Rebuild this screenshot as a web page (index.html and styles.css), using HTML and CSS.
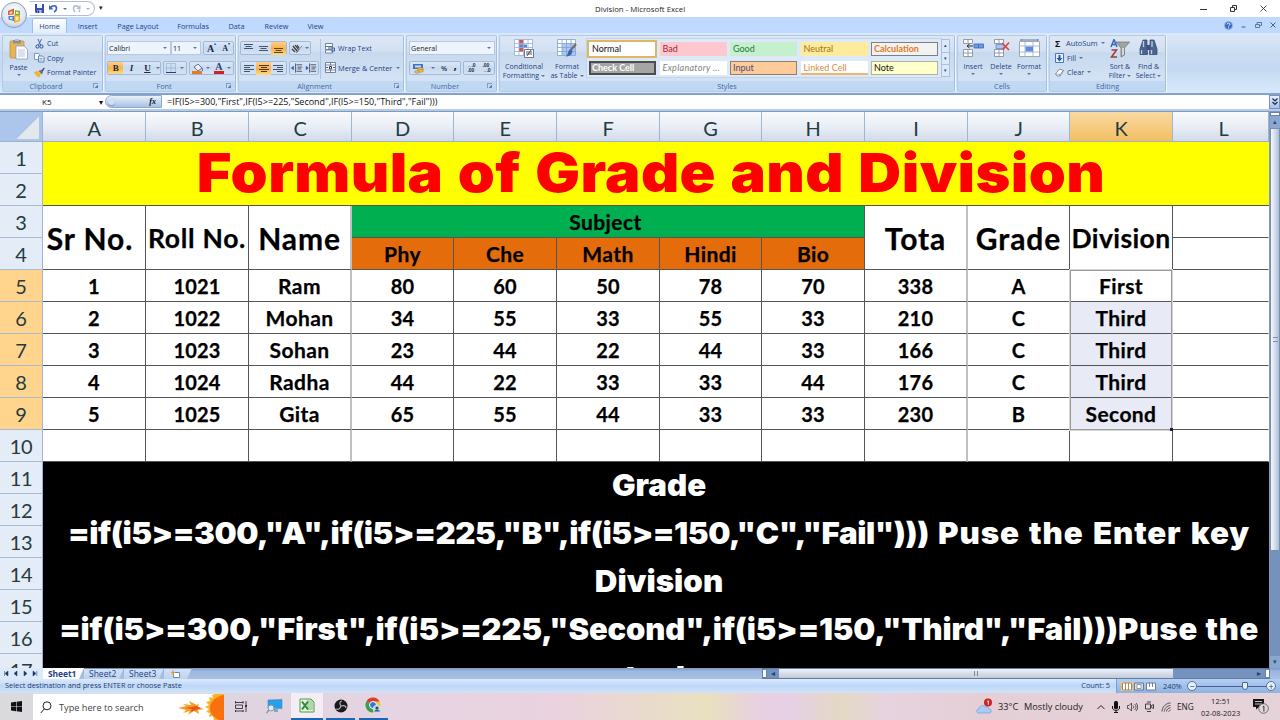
FILE: index.html
```
<!DOCTYPE html>
<html lang="en">
<head>
    <meta charset="UTF-8">
    <meta name="viewport" content="width=device-width, initial-scale=1.0">
    <title>Division - Microsoft Excel</title>
    <link rel="stylesheet" href="styles.css">
</head>
<body>

    <div class="window">

        <header class="titlebar">
            <div class="quick-access">
                <svg width="9" height="9" viewBox="0 0 9 9"><path d="M0 0h9v9H1L0 8z" fill="#3b4fa8"/><path d="M2 0h5v4H2z" fill="#eef3ff"/><path d="M2.500 6h4v3h-4z" fill="#b8c4ea"/><path d="M3 6.500h1.200V9H3z" fill="#26357f"/></svg>
                <svg width="9" height="9" viewBox="0 0 9 9"><path d="M1.500 3.800C3.500 1 7.500 1 7.500 4.200 7.500 6 6.500 7.200 5 8" fill="none" stroke="#3c62c4" stroke-width="1.700"/><path d="M0 1v4.500h4.500z" fill="#3c62c4"/></svg>
                <i class="caret"></i>
                <svg width="9" height="9" viewBox="0 0 9 9"><path d="M7 3.500C5 1 1.500 1 1.500 4.500 1.500 6 2 7 3 8M7.500 8V5.500" fill="none" stroke="#aeb9cd" stroke-width="1.400"/><path d="M8.500 1v4H4.500z" fill="#aeb9cd"/></svg>
                <i class="caret pale"></i>
            </div>
            <span class="customize">&#9662;</span>
            <h1>Division - Microsoft Excel</h1>
            <div class="window-buttons">
                <svg width="7" height="7" viewBox="0 0 7 7"><path d="M0 4.500h7" stroke="#333"/></svg>
                <svg width="7" height="7" viewBox="0 0 7 7"><path d="M.5 2.500h4v4h-4zM2.500 2V.5h4v4H5" fill="none" stroke="#333"/></svg>
                <svg width="7" height="7" viewBox="0 0 7 7"><path d="M.5.5l6 6M6.500.5l-6 6" stroke="#333" stroke-width=".9"/></svg>
            </div>
        </header>

        <div class="office-button">
            <svg width="17" height="17" viewBox="0 0 17 17">
                <path d="M2 4l6-2.500v6L2 8z" fill="#e2582a"/><path d="M3.500 5l3-1v2.500l-3 .5z" fill="#ffd9b8"/>
                <path d="M9 3l5 1v4H9z" fill="#6fae3c"/><path d="M10 4.500l2.500.5v2H10z" fill="#dcf0c4"/>
                <path d="M2.500 9H8v5l-5.500-1.500z" fill="#3f7fd0"/><path d="M4 10h2.500v2.500L4 12z" fill="#d2e6ff"/>
                <path d="M8 8h6v6l-6 2z" fill="#f0ac1c"/><path d="M9.500 9.500h3V13l-3 .8z" fill="#fff0b8"/>
            </svg>
        </div>

        <nav class="tabs">
            <span class="tab active t-home">Home</span>
            <span class="tab t-insert">Insert</span>
            <span class="tab t-page">Page Layout</span>
            <span class="tab t-formulas">Formulas</span>
            <span class="tab t-data">Data</span>
            <span class="tab t-review">Review</span>
            <span class="tab t-view">View</span>
            <div class="doc-buttons">
                <svg width="9" height="9" viewBox="0 0 9 9"><circle cx="4.500" cy="4.500" r="4" fill="#2f66c0" stroke="#9db9e4"/><path d="M3 3.500C3 1.700 6 1.800 6 3.400 6 4.500 4.500 4.300 4.500 5.500M4.500 6.300v1" fill="none" stroke="#fff"/></svg>
                <svg width="6" height="6" viewBox="0 0 6 6"><path d="M.5 5h4" stroke="#4f617f"/></svg>
                <svg width="7" height="6" viewBox="0 0 7 6"><path d="M.5 2.500h4v3h-4zM2 2V.5h4.500v3H5" fill="none" stroke="#5a6c8c" stroke-width=".9"/></svg>
                <svg width="6" height="6" viewBox="0 0 6 6"><path d="M.5.5l5 5M5.500.5l-5 5" stroke="#4f617f"/></svg>
            </div>
        </nav>

        <section class="ribbon">

            <div class="group g-clipboard">
                <div class="tools">
                    <div class="big paste">
                        <svg width="20" height="21" viewBox="0 0 20 21"><rect x="1" y="2" width="14" height="17" rx="1" fill="#e9b453" stroke="#b98736" stroke-width=".7"/><path d="M4 1h8v3.500H4z" fill="#8a8f98"/><path d="M6 0h4v2H6z" fill="#b9bec6"/><path d="M7 7h8l3.500 3.500V20H7z" fill="#fbfcff" stroke="#7c93bb" stroke-width=".7"/><path d="M9 11h7M9 13h7M9 15h7M9 17h7" stroke="#a9bbd8" stroke-width=".8"/></svg>
                        <span>Paste</span>
                        <i class="caret"></i>
                    </div>
                    <div class="list">
                        <div class="item"><svg width="11" height="11" viewBox="0 0 11 11"><path d="M4 1l2.500 6M7.500 1L4.500 7" stroke="#4668a8" fill="none"/><circle cx="3.500" cy="8.500" r="1.600" fill="none" stroke="#27488d"/><circle cx="7.500" cy="8.500" r="1.600" fill="none" stroke="#27488d"/></svg>Cut</div>
                        <div class="item"><svg width="11" height="11" viewBox="0 0 11 11"><path d="M.5 1.500h4l1 1v5h-5z" fill="#fff" stroke="#5e83bf" stroke-width=".8"/><path d="M4.500 4h4l1.500 1.500V10H4.500z" fill="#eaf2ff" stroke="#3f68ab" stroke-width=".8"/><path d="M5.500 6.500h3M5.500 8h3" stroke="#5e83bf" stroke-width=".7"/></svg>Copy</div>
                        <div class="item"><svg width="11" height="11" viewBox="0 0 11 11"><path d="M0 5l4-1 3 3-1.500 3.500C3 10 1 8 0 5z" fill="#edb72e"/><path d="M4.500 4l2-1 2.500 2-1 2.500z" fill="#6f6a94"/><path d="M7 3.500L10 .5l.8.8L8.500 5z" fill="#3f4f87"/></svg>Format Painter</div>
                    </div>
                </div>
                <div class="label with-launcher">Clipboard<i class="launcher"></i></div>
            </div>

            <div class="group g-font">
                <div class="tools rows">
                    <div class="line">
                        <div class="combo font-name">Calibri<i class="caret"></i></div>
                        <div class="combo font-size">11<i class="caret"></i></div>
                        <div class="buttons grow"><b class="big-a">A<sup>&#9652;</sup></b><b class="small-a">A<sup>&#9662;</sup></b></div>
                    </div>
                    <div class="line">
                        <div class="buttons biu"><b class="on">B</b><em>I</em><u>U</u><i class="caret"></i></div>
                        <div class="buttons borders"><svg width="10" height="10" viewBox="0 0 10 10"><path d="M.5.500h9v9M.5.5v9M5 .5v9M.5 5h9" fill="none" stroke="#8ba0c3" stroke-dasharray="1 1"/><path d="M0 9.500h10" stroke="#2b3f66"/></svg><i class="caret"></i></div>
                        <div class="buttons fills">
                            <svg width="11" height="11" viewBox="0 0 11 11"><path d="M2 4l4-3 4 4-4 3z" fill="#e8eefa" stroke="#41598c" stroke-width=".8"/><path d="M9 4.500c2 1 1.500 2 1.500 3.500" stroke="#3669c7" fill="none"/><path d="M0 8h10v3H0z" fill="#e87a1c"/></svg><i class="caret"></i>
                            <span class="font-color">A</span><i class="caret"></i>
                        </div>
                    </div>
                </div>
                <div class="label with-launcher">Font<i class="launcher"></i></div>
            </div>

            <div class="group g-alignment">
                <div class="tools">
                    <div class="align-left">
                        <div class="line">
                            <div class="buttons three">
                                <svg viewBox="0 0 15 13"><path d="M3 2.500h9M4.500 4.500h6M3 6.500h9" stroke="#48536a"/></svg>
                                <svg viewBox="0 0 15 13"><path d="M3 4.500h9M4.500 6.500h6M3 8.500h9" stroke="#48536a"/></svg>
                                <svg class="on" viewBox="0 0 15 13"><path d="M3 6.500h9M4.500 8.500h6M3 10.500h9" stroke="#60461c"/></svg>
                            </div>
                            <div class="buttons orient"><svg width="12" height="11" viewBox="0 0 12 11"><path d="M2 3l5 6M4 2l4 5M1 6l3 3M6 2l2 3" stroke="#333" stroke-width="1.200"/><path d="M5 10l6-7" stroke="#7c879d"/></svg><i class="caret"></i></div>
                        </div>
                        <div class="line">
                            <div class="buttons three">
                                <svg viewBox="0 0 15 13"><path d="M3 3.500h10M3 5.500h6M3 7.500h10M3 9.500h6" stroke="#48536a"/></svg>
                                <svg class="on" viewBox="0 0 15 13"><path d="M3 3.500h10M5 5.500h6M3 7.500h10M5 9.500h6" stroke="#4a3818"/></svg>
                                <svg viewBox="0 0 15 13"><path d="M2 3.500h10M6 5.500h6M2 7.500h10M6 9.500h6" stroke="#48536a"/></svg>
                            </div>
                            <div class="buttons indent">
                                <svg viewBox="0 0 15 13"><path d="M7 2.500h6M8 5h5M8 7h4M7 9.500h6M6 1v10" stroke="#48536a"/><path d="M1 6l3-2.500v5z" fill="#2c5fbe"/></svg>
                                <svg viewBox="0 0 15 13"><path d="M7 2.500h6M8 5h5M8 7h4M7 9.500h6M6 1v10" stroke="#48536a"/><path d="M5 6L2 3.500v5z" fill="#2c5fbe"/></svg>
                            </div>
                        </div>
                    </div>
                    <div class="align-right">
                        <div class="item"><svg width="11" height="11" viewBox="0 0 11 11"><path d="M.5.5h7v3h-7zM.5 3.500h7v3h-7zM.5 7h7v3h-7z" fill="#f8fbff" stroke="#5c6b86" stroke-width=".8"/><path d="M3 5h6.500v3H6" fill="none" stroke="#3c5ca0"/></svg>Wrap Text</div>
                        <div class="item"><svg width="11" height="11" viewBox="0 0 11 11"><path d="M.5.5h10v10H.5zM.5 3h10M.5 8h10M5.500.5V3M5.500 8v2.500" fill="#f8fbff" stroke="#5c6b86" stroke-width=".8"/><path d="M1 5.500h2M8 5.500h2" stroke="#2c5fbe"/><path d="M4.500 4.500h2v2.300h-2z" fill="none" stroke="#222" stroke-width=".9"/></svg><span class="merge-text">Merge &amp; Center</span><i class="caret"></i></div>
                    </div>
                </div>
                <div class="label with-launcher">Alignment<i class="launcher"></i></div>
            </div>

            <div class="group g-number">
                <div class="tools rows">
                    <div class="combo number-format">General<i class="caret"></i></div>
                    <div class="line">
                        <div class="buttons money">
                            <svg width="11" height="11" viewBox="0 0 11 11"><path d="M0 1h10v5H0z" fill="#4a73bd"/><path d="M2 2.500h6v2H2z" fill="#c8dcf8"/><ellipse cx="7.500" cy="6" rx="3" ry="1.300" fill="#f0c24a" stroke="#9a742a" stroke-width=".5"/><ellipse cx="7.500" cy="8" rx="3" ry="1.300" fill="#f0c24a" stroke="#9a742a" stroke-width=".5"/><ellipse cx="4" cy="9" rx="2.500" ry="1.300" fill="#f0c24a" stroke="#9a742a" stroke-width=".5"/></svg><i class="caret"></i><b class="percent-sign">%</b><b class="comma">,</b>
                        </div>
                        <div class="buttons decimals"><span><s>&#8592;</s>.0<br>.00</span><span>.00<br><s>&#8594;</s>.0</span></div>
                    </div>
                </div>
                <div class="label with-launcher">Number<i class="launcher"></i></div>
            </div>

            <div class="group g-styles">
                <div class="tools">
                    <div class="big conditional">
                        <svg width="20" height="19" viewBox="0 0 20 19"><path d="M.5.500h18v16H.5z" fill="#fff"/><path d="M5 1h4v4.500H5zM5 9h4v4H5z" fill="#d9534a"/><path d="M5 5.500h8V9H5z" fill="#5a86d2"/><path d="M.5.500h18v16H.5zM5 .5v16M9.500.500v16M14 .5v16M.5 4.500h18M.5 8.500h18M.5 12.500h18" fill="none" stroke="#96add2" stroke-width=".8"/><path d="M10.500 10.500h9v8h-9z" fill="#fff" stroke="#4b5874" stroke-width=".8"/><path d="M12 13h6M12 15h6M13 17l4-6" stroke="#333" stroke-width=".8"/></svg>
                        <span>Conditional<br>Formatting<i class="caret"></i></span>
                    </div>
                    <div class="big as-table">
                        <svg width="20" height="19" viewBox="0 0 20 19"><path d="M.5.500h18v16H.5z" fill="#fff"/><path d="M5 4.500h13.500v12H5z" fill="#a9c8f2"/><path d="M.5.500h18v16H.5zM5 .5v16M9.500.500v16M14 .5v16M.5 4.500h18M.5 8.500h18M.5 12.500h18" fill="none" stroke="#7f9fd0" stroke-width=".8"/><path d="M19 5l-6 7" stroke="#7b6a57" stroke-width="2"/><path d="M13.500 10.500l2 2c-1 4-4 5-7 5 3-2 2-6 5-7z" fill="#3c63ac"/></svg>
                        <span>Format<br>as Table<i class="caret"></i></span>
                    </div>
                    <div class="gallery">
                        <span class="swatch normal">Normal</span>
                        <span class="swatch bad">Bad</span>
                        <span class="swatch good">Good</span>
                        <span class="swatch neutral">Neutral</span>
                        <span class="swatch calculation">Calculation</span>
                        <span class="swatch check">Check Cell</span>
                        <span class="swatch explanatory">Explanatory ...</span>
                        <span class="swatch input">Input</span>
                        <span class="swatch linked">Linked Cell</span>
                        <span class="swatch note">Note</span>
                    </div>
                    <div class="gallery-scroll"><span>&#9652;</span><span>&#9662;</span><span>&#9662;</span></div>
                </div>
                <div class="label">Styles</div>
            </div>

            <div class="group g-cells">
                <div class="tools">
                    <div class="big">
                        <svg width="21" height="19" viewBox="0 0 21 19"><path d="M.5.500h9v4h-9zM.5 10.500h9v7h-9zM5 .5v4M5 10.500v7M.5 14h9" fill="#fff" stroke="#7b8698" stroke-width=".8"/><path d="M11 5h9.500v4H11zM15.500 5v4" fill="#6c9be6" stroke="#3a65b5" stroke-width=".8"/><path d="M4 7h6M6.500 5L4 7l2.500 2" fill="none" stroke="#333"/></svg>
                        <span>Insert</span><i class="caret"></i>
                    </div>
                    <div class="big">
                        <svg width="21" height="19" viewBox="0 0 21 19"><path d="M3.500.500h9v4h-9zM3.500 10.500h9v7h-9zM8 .5v4M8 10.500v7M3.500 14h9" fill="#fff" stroke="#7b8698" stroke-width=".8"/><path d="M5 5.500h8v4H5z" fill="#a9c4ee" stroke="#5b81c2" stroke-width=".7"/><path d="M11 4l7 7M18 3.500L11.500 11" stroke="#dc4636" stroke-width="1.600"/></svg>
                        <span>Delete</span><i class="caret"></i>
                    </div>
                    <div class="big">
                        <svg width="21" height="19" viewBox="0 0 21 19"><path d="M.5 2.500h20v15H.5z" fill="#fff" stroke="#8995a9" stroke-width=".8"/><path d="M6 2.500v15M14 2.500v15M.5 7h20M.5 13h20" stroke="#9caac2" stroke-width=".8"/><path d="M6.500 7.500h7.500v5H6.500z" fill="#5c8ce0"/><path d="M2 0v2M19 0v2M2 1h17" stroke="#4a5a78" stroke-width=".8"/></svg>
                        <span>Format</span><i class="caret"></i>
                    </div>
                </div>
                <div class="label">Cells</div>
            </div>

            <div class="group g-editing">
                <div class="tools">
                    <div class="list">
                        <div class="item"><b class="sigma">&Sigma;</b><span class="autosum">AutoSum</span><i class="caret"></i></div>
                        <div class="item"><svg width="9" height="10" viewBox="0 0 9 10"><path d="M.5.500h8v9h-8z" fill="#e6f0ff" stroke="#4a76bb"/><path d="M4.500 2v3" stroke="#2458b8" stroke-width="2"/><path d="M1.500 5h6L4.500 8.500z" fill="#2458b8"/></svg>Fill<i class="caret"></i></div>
                        <div class="item"><svg width="9" height="9" viewBox="0 0 9 9"><path d="M.5 6l4-5 4 1.500L5 8H2z" fill="#fff" stroke="#6d7b93" stroke-width=".8"/><path d="M.5 6L5 6.500V8M5 6.500l3.500-4" fill="none" stroke="#6d7b93" stroke-width=".6"/></svg>Clear<i class="caret"></i></div>
                    </div>
                    <div class="big sort">
                        <svg width="20" height="20" viewBox="0 0 20 20"><path d="M6 3h13.500l-5 6v7l-3.500 2V9z" fill="#a3a29f" stroke="#6f6e6c" stroke-width=".7"/><path d="M12 9h2v6.500l-2 1z" fill="#d8d7d3"/><path d="M1 8l3-7.500L7 8M2 5.500h4" fill="none" stroke="#3367be" stroke-width="1.500"/><path d="M1.500 11h5l-5 7H7" fill="none" stroke="#a33d3a" stroke-width="1.600"/></svg>
                        <span>Sort &amp;<br>Filter<i class="caret"></i></span>
                    </div>
                    <div class="big find">
                        <svg width="19" height="19" viewBox="0 0 19 19"><path d="M4 1h4v4l.5 10.500H1V10zM11 1h4l3 9v5.500h-7.500L11 5z" fill="#4c658f" stroke="#2e4166" stroke-width=".7"/><path d="M8 6h3v5H8z" fill="#3b5179"/><path d="M2.500 11v4M4.500 2v6M12.500 11v4M13 2v6" stroke="#bdd0ee" stroke-width="1.300"/></svg>
                        <span>Find &amp;<br>Select<i class="caret"></i></span>
                    </div>
                </div>
                <div class="label">Editing</div>
            </div>
        </section>

        <div class="formula-bar">
            <div class="name-box">K5<span>&#9662;</span></div>
            <div class="fx"><i class="knob"></i><em>fx</em></div>
            <div class="formula">=IF(I5&gt;=300,"First",IF(I5&gt;=225,"Second",IF(I5&gt;=150,"Third","Fail")))</div>
            <div class="expand"><svg width="6" height="8" viewBox="0 0 6 8"><path d="M.5.5L3 3 5.500.5M.5 4L3 6.500 5.500 4" fill="none" stroke="#1d2a44" stroke-width="1.200"/></svg></div>
        </div>

        <main class="workbook">
            <div class="sheet">
                <table>
                    <colgroup>
                        <col class="w-head"><col class="w103"><col class="w103"><col class="w103"><col class="w102"><col class="w103"><col class="w103"><col class="w102"><col class="w103"><col class="w103"><col class="w102"><col class="w103"><col class="w-last">
                    </colgroup>
                    <tr class="columns"><th class="corner"></th><th>A</th><th>B</th><th>C</th><th>D</th><th>E</th><th>F</th><th>G</th><th>H</th><th>I</th><th>J</th><th class="sel">K</th><th class="last">L</th></tr>
                    <tr><th>1</th><td class="title" colspan="12" rowspan="2"><span>Formula of Grade and Division</span></td></tr>
                    <tr><th>2</th></tr>
                    <tr>
                        <th>3</th>
                        <td class="head sr" rowspan="2">Sr No.</td><td class="head small roll" rowspan="2">Roll No.</td><td class="head soft" rowspan="2">Name</td>
                        <td class="subject" colspan="5">Subject</td>
                        <td class="head soft" rowspan="2">Tota</td><td class="head" rowspan="2">Grade</td><td class="head small division" rowspan="2">Division</td><td></td>
                    </tr>
                    <tr><th>4</th><td class="orange">Phy</td><td class="orange">Che</td><td class="orange">Math</td><td class="orange">Hindi</td><td class="orange">Bio</td><td></td></tr>
                    <tr><th class="sel">5</th><td>1</td><td>1021</td><td class="word soft">Ram</td><td>80</td><td>60</td><td>50</td><td>78</td><td>70</td><td class="soft">338</td><td>A</td><td class="word">First</td><td></td></tr>
                    <tr><th class="sel">6</th><td>2</td><td>1022</td><td class="word soft">Mohan</td><td>34</td><td>55</td><td>33</td><td>55</td><td>33</td><td class="soft">210</td><td>C</td><td class="word picked">Third</td><td></td></tr>
                    <tr><th class="sel">7</th><td>3</td><td>1023</td><td class="word soft">Sohan</td><td>23</td><td>44</td><td>22</td><td>44</td><td>33</td><td class="soft">166</td><td>C</td><td class="word picked">Third</td><td></td></tr>
                    <tr><th class="sel">8</th><td>4</td><td>1024</td><td class="word soft">Radha</td><td>44</td><td>22</td><td>33</td><td>33</td><td>44</td><td class="soft">176</td><td>C</td><td class="word picked">Third</td><td></td></tr>
                    <tr><th class="sel">9</th><td>5</td><td>1025</td><td class="word soft">Gita</td><td>65</td><td>55</td><td>44</td><td>33</td><td>33</td><td class="soft">230</td><td>B</td><td class="word picked">Second</td><td></td></tr>
                    <tr><th>10</th><td></td><td></td><td class="soft"></td><td></td><td></td><td></td><td></td><td></td><td class="soft"></td><td></td><td></td><td></td></tr>
                    <tr>
                        <th>11</th>
                        <td class="notes" colspan="12" rowspan="7">
                            <div class="notes-text">
                                <p>Grade</p>
                                <p><span class="code">=if(i5&gt;=300,"A",if(i5&gt;=225,"B",if(i5&gt;=150,"C","Fail")))</span><span class="hint"> Puse the Enter key</span></p>
                                <p>Division</p>
                                <p class="long">=if(i5&gt;=300,"First",if(i5&gt;=225,"Second",if(i5&gt;=150,"Third","Fail)))<span class="hint">Puse the</span></p>
                                <p>enter key</p>
                            </div>
                        </td>
                    </tr>
                    <tr><th>12</th></tr>
                    <tr><th>13</th></tr>
                    <tr><th>14</th></tr>
                    <tr><th>15</th></tr>
                    <tr><th>16</th></tr>
                    <tr><th>17</th></tr>
                </table>
                <div class="selection"></div>
            </div>
            <div class="v-scroll">
                <div class="split"></div>
                <div class="arrow">&#9652;</div>
                <div class="v-thumb"><i></i></div>
                <div class="v-track"></div>
                <div class="arrow">&#9662;</div>
            </div>
        </main>

        <div class="sheet-bar">
            <div class="sheet-nav">
                <svg width="42" height="11" viewBox="0 0 42 11"><path d="M4.500 3v5M8 3v5L5 5.500zM17 3v5l-3-2.500zM24 3v5l3-2.500zM33 3v5l3-2.500zM36.800 3v5" fill="#1c3568" stroke="#1c3568" stroke-width=".5"/></svg>
            </div>
            <div class="sheet-tab current">Sheet1</div>
            <div class="sheet-tab">Sheet2</div>
            <div class="sheet-tab">Sheet3</div>
            <div class="sheet-tab new"><svg width="10" height="8" viewBox="0 0 10 8"><path d="M2.500 2.500h6v5h-6z" fill="#fff" stroke="#55719f" stroke-width=".8"/><path d="M2 0v5M0 2.500h4" stroke="#e4a01f" stroke-width="1.200"/></svg></div>
            <div class="h-scroll">
                <div class="h-split"></div>
                <div class="h-arrow">&#9666;</div>
                <div class="h-thumb"><i></i></div>
                <div class="h-arrow right">&#9656;</div>
                <div class="h-split"></div>
            </div>
        </div>

        <footer class="status">
            <span class="message">Select destination and press ENTER or choose Paste</span>
            <span class="count">Count: 5</span>
            <div class="zoom-area">
                <div class="views">
                    <svg class="on" width="12" height="9" viewBox="0 0 12 9"><path d="M1.500 1h9v7h-9zM4.500 1v7M7.500 1v7" fill="#fff" stroke="#8a7440" stroke-width=".8"/></svg>
                    <svg width="12" height="9" viewBox="0 0 12 9"><path d="M1.500 1h9v7h-9z" fill="#d9dfe8" stroke="#56657f" stroke-width=".8"/><path d="M4 2.500h4v4H4z" fill="#fff" stroke="#56657f" stroke-width=".6"/></svg>
                    <svg width="12" height="9" viewBox="0 0 12 9"><path d="M1.500 1h9v7h-9zM4.500 1v4M7.500 1v4" fill="#fff" stroke="#56657f" stroke-width=".8"/></svg>
                </div>
                <span class="percent">240%</span>
                <span class="round">&#8722;</span>
                <div class="slider"><i></i></div>
                <span class="round">+</span>
            </div>
        </footer>

        <div class="taskbar">
            <div class="start"><svg width="11" height="11" viewBox="0 0 11 11"><path d="M0 1.500L5 .8v4.400H0zM5.600.7L11 0v5.200H5.600zM0 5.800h5v4.400L0 9.500zM5.600 5.800H11V11l-5.400-.7z" fill="#111"/></svg></div>
            <div class="search">
                <svg width="12" height="13" viewBox="0 0 12 13"><circle cx="7" cy="4.800" r="4" fill="none" stroke="#222"/><path d="M4.300 7.800L.8 12" stroke="#222"/></svg>
                <span>Type here to search</span>
                <svg class="sun" width="46" height="27" viewBox="0 0 46 27">
                    <path d="M46 0h-9l-3 1 1 3-4-1 1 4-4 1 3 3-4 2 4 2-3 3 4 1-1 4 4-1 1 4 10 1z" fill="#fbb326"/>
                    <path d="M46 1c-7 1-14 6-14 13s6 12 14 13z" fill="#f9700f"/>
                    <path d="M0 14l8-2-3-2 8 1-2-4 8 4 2-2-1 4 6 2-6 1 1 4-5-3-6 4 2-4-7 2 3-3z" fill="#f6a02a"/>
                    <path d="M6 14l7-1 5-1 5 2-5 2-6 2 2-3z" fill="#ea5416"/>
                </svg>
            </div>
            <div class="app"><svg width="12" height="11" viewBox="0 0 12 11"><path d="M.5 0v2.500M8 0v2.500M0 1.500h8.500M.5 4h7v3.500h-7zM.5 11V9M8 11V9M0 10h8.500M11 0v11" fill="none" stroke="#333" stroke-width=".9"/><path d="M10 4h2v2h-2z" fill="#333"/></svg></div>
            <div class="app"><svg width="17" height="15" viewBox="0 0 17 15"><path d="M2 1l14-.5v9L2 9z" fill="#279ee8" stroke="#3f89c0" stroke-width=".6"/><path d="M8 10h4v3H8z" fill="#7ea6c6"/><circle cx="5" cy="9" r="3" fill="#d6ecfb" stroke="#8096ab"/><path d="M3 11L.5 14" stroke="#8096ab" stroke-width="1.300"/></svg></div>
            <div class="app open lit"><svg width="16" height="15" viewBox="0 0 16 15"><path d="M1 1h11l3 3v10H1z" fill="#e8f3e2" stroke="#4d9a48"/><path d="M8 3h6M8 5h6M8 7h6M8 9h6M8 11h6" stroke="#63a85b" stroke-width=".8"/><path d="M3 3.500l6 8M9 3.500l-6 8" stroke="#2a8a35" stroke-width="2"/></svg></div>
            <div class="app open"><svg width="14" height="14" viewBox="0 0 14 14"><circle cx="7" cy="7" r="6.500" fill="#191a1c"/><path d="M7 7C5 4 6 2 8 2M7 7c3-1 5 0 5 2M7 7c-1 3-3 4-5 3" fill="none" stroke="#aeb0b4" stroke-width="1.200"/></svg></div>
            <div class="app open"><svg width="17" height="17" viewBox="0 0 17 17"><circle cx="8" cy="8" r="7.500" fill="#f7c72a"/><path d="M8 8L1.500 4.200A7.500 7.500 0 0 1 14.500 4.500H8z" fill="#df3b30"/><path d="M1.500 4.200A7.500 7.500 0 0 0 8 15.500L10.500 10 8 8z" fill="#34a350"/><circle cx="8" cy="8" r="3.500" fill="#2f76dd" stroke="#fff"/><circle cx="12" cy="12" r="4.300" fill="#c9dced"/><circle cx="12" cy="11" r="1.600" fill="#444"/><path d="M9 14.500c1-2.500 5-2.500 6 0" fill="#315a9b"/></svg></div>

            <div class="tray">
                <svg class="weather" width="18" height="17" viewBox="0 0 18 17"><path d="M3 15c-3 0-3-4 0-4 0-4 5-4 6-2 3-1 4 1 4 2 3 0 3 4 0 4z" fill="#a9cdf6" stroke="#6f9edc" stroke-width=".7"/><circle cx="12" cy="4.500" r="4" fill="#cf2320"/><path d="M11.300 3.500l1-.8v4" fill="none" stroke="#fff" stroke-width=".9"/></svg>
                <span class="temp">33&deg;C</span>
                <span class="cloudy">Mostly cloudy</span>
                <div class="tray-icons">
                    <svg width="8" height="8" viewBox="0 0 8 8"><path d="M.5 6L4 2.500 7.500 6" fill="none" stroke="#222"/></svg>
                    <svg width="8" height="12" viewBox="0 0 8 12"><rect x="2" y="0" width="4" height="8" rx="1.500" fill="#111"/><path d="M.5 5v2c0 3 7 3 7 0V5M4 9v2M2 11.500h4" fill="none" stroke="#111"/></svg>
                    <svg width="11" height="10" viewBox="0 0 11 10"><path d="M.5 3.500h1.500L4.500 1v8L2 6.500H.5zM6 3.500c1 1 1 2 0 3M7.500 2c2 2 2 4 0 6M9 1c2.300 2.500 2.300 5.500 0 8" fill="none" stroke="#333" stroke-width=".8"/></svg>
                    <svg width="9" height="11" viewBox="0 0 9 11"><path d="M.5 3h5v5h-5zM6 5l2.500-1.500v4L6 6zM2 1h4M2 10.500h4" fill="none" stroke="#333" stroke-width=".9"/></svg>
                    <svg width="10" height="10" viewBox="0 0 10 10"><path d="M1 9.500C1 5 5 1 9.500 1M3.300 9.500c0-3 3-6 6.200-6M5.500 9.500c0-2 2-3.700 4-3.700M7.500 9.500L9.500 8" fill="none" stroke="#444" stroke-width=".9"/></svg>
                </div>
                <span class="lang">ENG</span>
                <div class="clock">12:51<br>02-08-2023</div>
                <svg class="action" width="18" height="17" viewBox="0 0 18 17"><path d="M1 1h11v8H7l-3 2.500V9H1z" fill="#151515"/><path d="M3 3.500h7M3 6h7" stroke="#e4d4dc" stroke-width=".9"/><circle cx="11.500" cy="10.500" r="4.800" fill="#e4d7dc" stroke="#555" stroke-width=".8"/><path d="M10.700 9l1.200-1v5.500" fill="none" stroke="#333"/></svg>
            </div>
        </div>
    </div>

</body>
</html>
```

FILE: styles.css
```
* {
    box-sizing: border-box;
}

body {
    margin: 0;
    width: 1280px;
    height: 720px;
    overflow: hidden;
    font-family: "Open Sans", "Noto Sans", sans-serif;
    font-size: 7.1px;
    color: #1f4283;
}

svg {
    display: block;
    flex: none;
}

.window {
    position: relative;
    display: flex;
    flex-direction: column;
    width: 1280px;
    height: 720px;
    background: #bfd7f7;
}

.caret {
    display: inline-block;
    flex: none;
    width: 0;
    height: 0;
    border: 2px solid transparent;
    border-top: 2px solid #5f7597;
    border-bottom: 0;
}

.caret.pale {
    border-top-color: #a9b5c9;
}

/* title bar */
.titlebar {
    display: flex;
    height: 17px;
    background: #fff;
    color: #222;
}

.quick-access {
    display: flex;
    align-items: center;
    gap: 5px;
    width: 66px;
    height: 15px;
    margin: 1px 0 0 29px;
    padding-left: 5px;
    border: 1px solid #b6bfcd;
    border-left-color: transparent;
    border-radius: 0 8px 8px 0;
}

.customize {
    width: 120px;
    padding: 3px 0 0 4px;
    font-size: 7px;
}

h1 {
    flex: 1;
    margin: 0;
    padding: 4px 0 0 380px;
    font-size: 7.8px;
    font-weight: 400;
    line-height: 10px;
}

.window-buttons {
    display: flex;
    gap: 23px;
    padding: 5px 13px 0 0;
}

.office-button {
    position: absolute;
    left: 1px;
    top: 2px;
    z-index: 2;
    display: grid;
    place-items: center;
    width: 26px;
    height: 26px;
    border: 1px solid #8e9db5;
    border-radius: 50%;
    background: radial-gradient(circle at 50% 35%, #fff, #dde5f0 60%, #aab8cd);
}

/* ribbon tabs */
.tabs {
    display: flex;
    height: 16px;
    padding-left: 32px;
    background: #bfd9ff;
    font-size: 7.3px;
}

.tab {
    padding-top: 4px;
    text-align: center;
    line-height: 10px;
}

.tab.active {
    height: 17px;
    margin-top: 1px;
    padding-top: 2px;
    border: 1px solid #9fbde6;
    border-bottom: 0;
    border-radius: 2px 2px 0 0;
    background: linear-gradient(#fdfeff, #dfebf9);
}

.t-home { width: 35px; }
.t-insert { width: 41px; }
.t-page { width: 60px; }
.t-formulas { width: 50px; }
.t-data { width: 37px; }
.t-review { width: 43px; }
.t-view { width: 35px; }

.doc-buttons {
    display: flex;
    flex: 1;
    justify-content: flex-end;
    align-items: center;
    gap: 8px;
    padding-right: 4px;
}

/* ribbon */
.ribbon {
    display: flex;
    gap: 2px;
    height: 62px;
    padding: 2px;
    border-bottom: 2px solid #84a3cc;
    background: linear-gradient(#dce8f7, #c9dcf2 35%, #c4d9f2 60%, #d9e9fb);
}

.group {
    display: flex;
    flex-direction: column;
    height: 57px;
    border: 1px solid #b4cbe8;
    border-right-color: #a3bddf;
    border-radius: 2px;
    background: linear-gradient(#dde8f6, #d2e0f2 28%, #c8d9ee 30%, #d8e6f7);
    box-shadow: 1px 0 0 #eef5fd;
}

.tools {
    display: flex;
    flex: 1;
    min-height: 0;
}

.label {
    display: flex;
    justify-content: center;
    align-items: center;
    position: relative;
    height: 10px;
    background: #c0d8f1;
    color: #4068a6;
    font-size: 7.3px;
}

.with-launcher {
    padding-right: 13px;
}

.launcher {
    position: absolute;
    right: 4px;
    top: 2px;
    width: 5px;
    height: 5px;
    border: 1px solid #7f9dc8;
    border-right-width: 0;
    border-bottom-width: 0;
    background: linear-gradient(135deg, transparent 60%, #5d7fb3 60%);
}

.g-clipboard { width: 101px; }
.g-font { width: 131px; }
.g-alignment { width: 166px; }
.g-number { width: 91px; }
.g-styles { width: 456px; }
.g-cells { width: 90px; }
.g-editing { width: 117px; }

.big {
    display: flex;
    flex-direction: column;
    align-items: center;
    padding-top: 3px;
    text-align: center;
    line-height: 8.5px;
    white-space: nowrap;
}

.big span {
    margin-top: 4px;
}

.big span .caret {
    margin: 0 0 1px 2px;
}

.big > .caret {
    margin-top: 2px;
}

.paste {
    width: 31px;
}

.paste span {
    margin-top: 3px;
}

.list {
    display: flex;
    flex-direction: column;
}

.item {
    display: flex;
    align-items: center;
    gap: 2px;
    height: 14.5px;
    white-space: nowrap;
}

.line {
    display: flex;
    gap: 2px;
}

.rows {
    flex-direction: column;
    gap: 6px;
    padding-top: 5px;
}

.combo {
    display: flex;
    align-items: center;
    justify-content: space-between;
    height: 14px;
    padding: 0 3px 0 1px;
    border: 1px solid #b3c9e6;
    background: #edf4fd;
    color: #222;
}

.buttons {
    display: flex;
    align-items: center;
    justify-content: space-around;
    height: 14px;
    border: 1px solid #9fb9db;
    border-radius: 2px;
    background: linear-gradient(#dbe7f6, #c9daef 50%, #d4e3f5);
    color: #1c2a44;
}

.on {
    background: linear-gradient(#fdcf8c, #f9b04a 50%, #fcdb84);
}

/* font group */
.g-font .rows { padding-left: 1px; }
.font-name { width: 64px; }
.font-size { width: 30px; margin-left: -2px; }
.grow { width: 31px; font-family: "Liberation Serif", serif; }
.grow sup { position: relative; top: -2px; font-size: 4px; line-height: 0; color: #2b5ab0; }
.big-a { font-size: 10px; }
.small-a { font-size: 8px; }
.biu { width: 54px; font-family: "Liberation Serif", serif; font-size: 9px; }
.biu b, .biu em, .biu u { width: 15px; height: 12px; text-align: center; line-height: 12px; font-weight: 700; }
.borders { width: 24px; }
.fills { width: 45px; }

.font-color {
    width: 10px;
    height: 11px;
    border-bottom: 3px solid #d32020;
    font: bold 10px/8px "Liberation Serif", serif;
    text-align: center;
    color: #26437c;
}

/* alignment group */
.align-left {
    display: flex;
    flex-direction: column;
    gap: 6px;
    width: 81px;
    padding: 5px 0 0 1px;
}

.three { width: 47px; }
.three svg { width: 15px; height: 13px; }
.orient { width: 22px; }
.indent { width: 30px; }
.indent svg { width: 14px; height: 13px; }

.align-right {
    display: flex;
    flex-direction: column;
    gap: 5px;
    margin-top: 3px;
    padding: 2px 0 0 4px;
    height: 40px;
    border-left: 1px solid #adc4e2;
}

.merge-text { font-size: 7.4px; }
.align-right .caret { margin-left: 2px; }

/* number group */
.g-number .rows { padding-left: 2px; }
.number-format { width: 86px; }
.money { width: 52px; }
.percent-sign { font-weight: 600; }
.money .comma { font-size: 12px; line-height: 4px; margin-top: -6px; }
.decimals { width: 32px; font: bold 5px/5px "Liberation Sans", sans-serif; }
.decimals s { color: #2c5fbe; text-decoration: none; font-size: 4px; }

/* styles group */
.conditional { width: 48px; }
.as-table { width: 38px; }

.gallery {
    display: grid;
    grid-template-columns: repeat(5, 70.5px);
    grid-template-rows: 19px 19px;
    margin-top: 2px;
    width: 356px;
    height: 40px;
    background: #dce9f8;
    border: 1px solid #c1d4ec;
    font-family: Lato, sans-serif;
    font-size: 9px;
}

.swatch {
    align-self: center;
    width: 67px;
    height: 14px;
    margin-left: 2px;
    padding-left: 3px;
    line-height: 14px;
    white-space: nowrap;
    overflow: hidden;
}

.normal { width: 70px; height: 18px; margin-left: 0; padding-left: 3px; border: 2px solid #e2b661; background: #fff; color: #111; }
.bad { background: #ffc7ce; color: #9c2a36; }
.good { background: #c6efce; color: #257a35; }
.neutral { background: #ffeb9c; color: #9c7420; }
.calculation { border: 1px solid #7f7f7f; background: #f2f2f2; color: #e27b22; font-weight: 700; line-height: 12px; padding-left: 2px; }
.check { border: 2px solid #4d4d4d; background: #a5a5a5; color: #fff; font-weight: 700; line-height: 10px; padding-left: 1px; }
.explanatory { background: #fff; color: #7f7f7f; font-style: italic; letter-spacing: 0.3px; }
.input { border: 1px solid #8c7f76; background: #ffcc99; color: #4d4b78; line-height: 12px; padding-left: 2px; }
.linked { border-bottom: 2px solid #f0b66e; background: #fff; color: #dc8a3d; }
.note { border: 1px solid #b2b2a0; background: #ffffcc; color: #111; line-height: 12px; padding-left: 2px; }

.gallery-scroll {
    display: grid;
    grid-template-rows: repeat(3, 1fr);
    width: 9px;
    height: 38px;
    margin: 3px 0 0 -1px;
    border: 1px solid #a9c0df;
    background: #dce9f8;
    font-size: 5px;
    text-align: center;
    line-height: 11px;
}

.gallery-scroll span + span {
    border-top: 1px solid #a9c0df;
}

.g-cells .big { width: 28px; }
.g-cells .tools { padding-left: 1px; }

/* editing group */
.g-editing .list { width: 57px; padding-left: 5px; }
.g-editing .item { gap: 3px; }
.sigma { width: 8px; font-size: 9px; color: #111; }
.autosum { font-size: 7.4px; }
.sort { width: 26px; }
.find { width: 31px; }
.g-editing .big span { margin-top: 3px; }
.g-editing .find span { margin-top: 4px; }

/* formula bar */
.formula-bar {
    display: flex;
    height: 14px;
    background: #fff;
    color: #111;
    font-size: 9px;
    line-height: 14px;
}

.name-box {
    width: 105px;
    padding-left: 42px;
    font-size: 8px;
}

.name-box span {
    float: right;
    margin-right: 2px;
}

.fx {
    display: flex;
    justify-content: space-between;
    width: 57px;
    height: 13px;
    margin-right: 5px;
    padding-right: 5px;
    border: 1px solid #8faad0;
    border-radius: 7px 0 0 7px;
    background: linear-gradient(#e9f1fb, #a8c1e6);
    font: bold italic 8px/12px "Liberation Serif", serif;
}

.knob {
    width: 7px;
    height: 7px;
    margin: 2px;
    border-radius: 50%;
    background: #d5e0ef;
    box-shadow: 0 1px 1px #7d96bb;
}

.formula {
    flex: 1;
    white-space: nowrap;
}

.expand {
    display: grid;
    place-items: center;
    width: 11px;
    border: 1px solid #7993bb;
    background: linear-gradient(#e6f0fc, #a5c0e6);
}

/* worksheet */
.workbook {
    display: flex;
    height: 559px;
    border-top: 2px solid #b5cbe8;
    background: #7e9bbf;
    padding-top: 1px;
}

.sheet {
    position: relative;
    width: 1269px;
    height: 556px;
    overflow: hidden;
    background: #fff;
}

table {
    width: 1269px;
    table-layout: fixed;
    border-spacing: 0;
    font-family: Lato, sans-serif;
}

.w-head { width: 43px; }
.w103 { width: 103px; }
.w102 { width: 102px; }
.w-last { width: 96px; }

th {
    height: 32px;
    padding: 1px 0 0;
    border-right: 1px solid #9fb5d0;
    border-bottom: 1px solid #a9bbd2;
    background: #e4ecf7;
    color: #243b42;
    font-size: 20px;
    font-weight: 400;
    line-height: 20px;
    letter-spacing: -0.3px;
}

.columns th {
    height: 30px;
    padding-top: 2px;
    background: linear-gradient(#f8fafd, #e9eef5 50%, #d3dbe9);
    border-bottom-color: #9fb0c8;
}

.columns .corner {
    background: linear-gradient(to bottom right, transparent 50%, #e3e8ef 50%) 16px 5px / 23px 22px no-repeat, #abc6ea;
}

.columns .last {
    padding-left: 6px;
}

th.sel {
    background: #ffd58d;
}

.columns .sel {
    background: linear-gradient(#f9d9a2, #f2bf62);
}

td {
    height: 32px;
    padding: 0;
    border-right: 1px solid #555;
    border-bottom: 1px solid #555;
    color: #000;
    font-size: 20px;
    font-weight: 700;
    line-height: 24px;
    letter-spacing: 0.2px;
    text-align: center;
    vertical-align: middle;
    white-space: nowrap;
    -webkit-text-stroke: 0.25px #000;
}

td:last-child {
    border-right-color: transparent;
}

td.soft {
    border-right: 2px solid #c0c0c0;
}

td.title {
    border-right: 0;
    background: #ff0;
    color: #f00;
    font-family: Inter, sans-serif;
    font-size: 54px;
    font-weight: 900;
    line-height: 60px;
    letter-spacing: 0.35px;
    word-spacing: 2px;
    -webkit-text-stroke: 0;
}

.title span {
    display: inline-block;
    transform: translate(-5px, -1px) scaleX(1.1);
}

td.word,
td.subject,
td.orange {
    font-size: 21px;
    letter-spacing: 0.4px;
}

td.subject {
    padding-right: 5px;
}

td.head {
    font-size: 30px;
    letter-spacing: 0.9px;
}

td.sr {
    padding-right: 8px;
}

td.small {
    font-size: 26.5px;
    letter-spacing: 0.7px;
}

td.division {
    letter-spacing: 0.4px;
}

.subject {
    background: #00b050;
}

.orange {
    background: #e46c0a;
}

.picked {
    background: #e8eaf5;
}

td.notes {
    border: 0;
    background: #000;
    color: #fff;
    font-family: Inter, sans-serif;
    font-size: 30px;
    font-weight: 900;
    letter-spacing: 0;
    vertical-align: top;
    -webkit-text-stroke: 0;
}

.notes-text {
    height: 206px;
    overflow: hidden;
}

.notes p {
    margin: 0;
    line-height: 48px;
    transform: translate(3px, -1px) scaleX(1.043);
}

.notes .long {
    letter-spacing: -0.1px;
    transform: translate(3px, -1px) scaleX(1.031);
}

.code {
    letter-spacing: -0.44px;
}

.hint {
    letter-spacing: 0.85px;
    word-spacing: 2px;
}

.long .hint {
    letter-spacing: 0.6px;
    word-spacing: 1px;
}

.selection {
    position: absolute;
    left: 1069px;
    top: 157px;
    width: 104px;
    height: 162px;
    border: 2px solid #999;
    outline: 1px solid #d5d5d5;
    outline-offset: -1px;
}

.selection::after {
    content: "";
    position: absolute;
    right: -2px;
    bottom: -2px;
    width: 3px;
    height: 3px;
    background: #222;
}

.v-scroll {
    display: flex;
    flex-direction: column;
    width: 11px;
    border-left: 1px solid #7f99c0;
    background: #7591bd;
}

.split {
    height: 4px;
    border: 1px solid #6681ab;
    background: #fff;
}

.arrow {
    height: 12px;
    background: #8ba6cf;
    color: #2c4779;
    font-size: 7px;
    line-height: 12px;
    text-align: center;
}

.v-thumb {
    display: grid;
    place-items: center;
    height: 423px;
    border: 1px solid #7a8dab;
    border-radius: 1px;
    background: linear-gradient(90deg, #f6f9fd, #d3dceb 50%, #aebfd9);
}

.v-thumb i {
    width: 5px;
    height: 5px;
    border: 1px solid #8191ab;
    border-width: 1px 0;
}

.v-track {
    flex: 1;
}

/* sheet tabs */
.sheet-bar {
    display: flex;
    height: 11px;
    background: linear-gradient(#7c99c6, #9db7dd 30%, #a7c0e4);
    font-size: 8.5px;
    line-height: 11px;
}

.sheet-nav {
    width: 43px;
    background: #dce9f9;
}

.sheet-tab {
    width: 40px;
    padding-left: 5px;
    border-top: 1px solid #758db4;
    background: linear-gradient(#d2e1f5, #bfd3ef);
    clip-path: polygon(0 0, 100% 0, calc(100% - 5px) 100%, 0 100%);
    line-height: 10px;
}

.sheet-tab.current {
    width: 41px;
    border-top-color: #fff;
    background: #fff;
    font-weight: 700;
    letter-spacing: -0.1px;
}

.sheet-tab.new {
    width: 28px;
    padding: 1px 0 0 7px;
}

.h-scroll {
    display: flex;
    width: 508px;
    margin-left: auto;
    margin-right: 10px;
    border-top: 1px solid #607ba7;
    border-bottom: 1px solid #607ba7;
    background: #7591bd;
}

.h-split {
    width: 5px;
    border: 1px solid #6681ab;
    background: #fff;
}

.h-arrow {
    width: 12px;
    color: #26416f;
    font-size: 8px;
    line-height: 8px;
    text-align: center;
}

.h-arrow.right {
    margin-left: auto;
}

.h-thumb {
    display: grid;
    place-items: center;
    width: 394px;
    background: linear-gradient(#eef1f6, #c2cad8);
}

.h-thumb i {
    width: 4px;
    height: 5px;
    border: 1px solid #7d8798;
    border-width: 0 1px;
}

/* status bar */
.status {
    display: flex;
    height: 14px;
    background: linear-gradient(#dce9fb, #bdd6f8 50%, #d3e3f8);
    color: #1f3c70;
    font-size: 7.35px;
    line-height: 13px;
}

.message {
    flex: 1;
    padding-left: 5px;
}

.count {
    padding-right: 6px;
}

.zoom-area {
    display: flex;
    align-items: center;
    width: 164px;
    padding-left: 4px;
    border-left: 1px solid #7f9fcb;
    background: linear-gradient(#b5cff3, #8fb2e2);
}

.views {
    display: flex;
    width: 42px;
}

.percent {
    width: 24px;
}

.round {
    display: grid;
    place-items: center;
    width: 10px;
    height: 10px;
    border: 1px solid #587098;
    border-radius: 50%;
    background: #e8f0fb;
    font-size: 9px;
    line-height: 7px;
}

.slider {
    position: relative;
    width: 69px;
    height: 1px;
    background: #46618f;
}

.slider i {
    position: absolute;
    left: 45px;
    top: -4px;
    width: 6px;
    height: 8px;
    border: 1px solid #4b648f;
    border-radius: 1px 1px 3px 3px;
    background: #e7eef8;
}

/* taskbar */
.taskbar {
    display: flex;
    height: 27px;
    background: linear-gradient(90deg, #dadadd 0, #dfd4df 240px, #e6d4e2 400px, #ead2df 560px, #e9dfc4 690px, #e8e0be 708px, #e8d0e2 760px, #e6d0e6 790px, #e3d9c4 842px, #e6d3df 885px, #e5cfd6 980px, #e6d3da 1280px);
    color: #222;
    font-size: 9.2px;
}

.start {
    display: grid;
    place-items: center;
    width: 33px;
}

.search {
    display: flex;
    align-items: center;
    width: 191px;
    padding-left: 7px;
    background: #fff;
    border-top: 1px solid #ddd;
    color: #444;
}

.search span {
    flex: 1;
    padding-left: 7px;
}

.app {
    display: grid;
    place-items: center;
    width: 33px;
}

.app + .app {
    width: 34px;
}

.app.open {
    border-bottom: 2px solid #1c66b8;
    margin-right: 4px;
    width: 29px;
}

.app.lit {
    background: #f4edf3;
    width: 32px;
    margin-right: 3px;
}

.tray {
    display: flex;
    align-items: center;
    width: 304px;
    margin-left: auto;
    white-space: nowrap;
}

.temp {
    width: 30px;
    padding-left: 4px;
}

.cloudy {
    width: 73px;
}

.tray-icons {
    display: flex;
    align-items: center;
    gap: 7px;
}

.lang {
    margin-left: 6px;
    font-size: 8.2px;
}

.clock {
    width: 54px;
    font-size: 7.5px;
    line-height: 12px;
    text-align: center;
}

.action {
    margin-left: 4px;
}
```
